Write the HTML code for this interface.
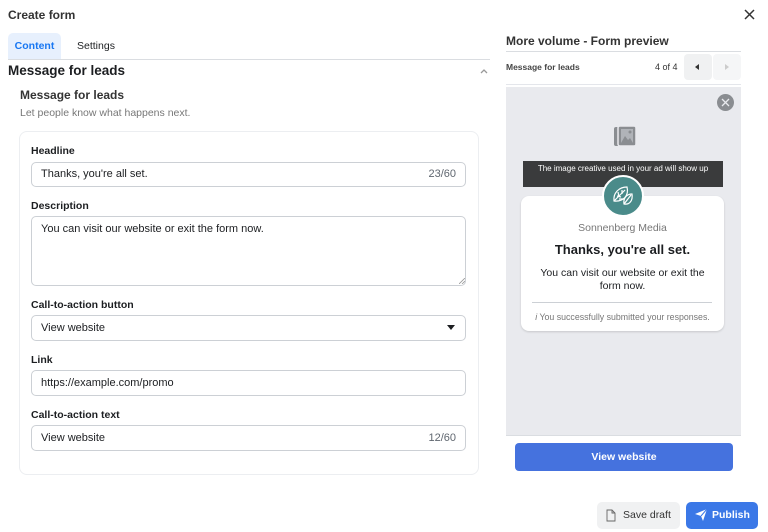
<!DOCTYPE html>
<html><head><meta charset="utf-8"><style>
*{box-sizing:border-box;margin:0;padding:0}
body{width:768px;height:532px;background:#fff;font-family:"Liberation Sans",Arial,sans-serif;position:relative;overflow:hidden;color:#1c1e21}
.a{position:absolute;white-space:nowrap}
.lbl{font-size:10.5px;font-weight:bold;color:#1c1e21}
.inp{position:absolute;left:31px;width:435px;border:1px solid #ccd0d5;border-radius:5px;background:#fff;font-size:11px;color:#1c1e21;padding-left:9px}
.cnt{position:absolute;right:9px;color:#606770;font-size:11px}
</style></head><body>
<div class="a" style="left:8px;top:8px;font-size:12px;font-weight:bold;color:#333">Create form</div>
<svg class="a" style="left:744px;top:9px" width="11" height="11" viewBox="0 0 11 11"><path d="M1 1L10 10M10 1L1 10" stroke="#333" stroke-width="1.5"/></svg>
<div class="a" style="left:8px;top:33px;width:53px;height:26px;background:#e7f0fd;border-radius:5px 5px 0 0;color:#1877f2;font-size:10.5px;font-weight:bold;text-align:center;line-height:26px">Content</div>
<div class="a" style="left:77px;top:33px;line-height:26px;font-size:10.5px;color:#1c1e21">Settings</div>
<div class="a" style="left:8px;top:59px;width:482px;height:1px;background:#dadde1"></div>
<div class="a" style="left:8px;top:63px;font-size:13.5px;font-weight:bold">Message for leads</div>
<svg class="a" style="left:480px;top:68px" width="8" height="6" viewBox="0 0 8 6"><path d="M1 5L4 2L7 5" stroke="#999" stroke-width="1.3" fill="none"/></svg>
<div class="a" style="left:20px;top:88px;font-size:12px;font-weight:bold;color:#333">Message for leads</div>
<div class="a" style="left:20px;top:107px;font-size:10.5px;color:#777">Let people know what happens next.</div>
<div class="a" style="left:19px;top:131px;width:460px;height:344px;border:1px solid #eceef1;border-radius:8px"></div>
<div class="a lbl" style="left:31px;top:145px">Headline</div>
<div class="inp" style="top:162px;height:25px;line-height:23px">Thanks, you're all set.<span class="cnt">23/60</span></div>
<div class="a lbl" style="left:31px;top:200px">Description</div>
<div class="inp" style="top:216px;height:70px;padding-top:6px">You can visit our website or exit the form now.</div>
<svg class="a" style="left:459px;top:278px" width="6" height="6"><path d="M0 6L6 0M3 6L6 3" stroke="#999" stroke-width="0.8"/></svg>
<div class="a lbl" style="left:31px;top:299px">Call-to-action button</div>
<div class="inp" style="top:315px;height:26px;line-height:24px">View website</div>
<svg class="a" style="left:447px;top:325px" width="8" height="5"><path d="M0 0H8L4 5Z" fill="#1c1e21"/></svg>
<div class="a lbl" style="left:31px;top:354px">Link</div>
<div class="inp" style="top:370px;height:26px;line-height:24px">https://example.com/promo</div>
<div class="a lbl" style="left:31px;top:409px">Call-to-action text</div>
<div class="inp" style="top:425px;height:26px;line-height:24px">View website<span class="cnt">12/60</span></div>

<div class="a" style="left:506px;top:34px;font-size:12px;font-weight:bold;color:#333">More volume - Form preview</div>
<div class="a" style="left:506px;top:51px;width:235px;height:1px;background:#dadde1"></div>
<div class="a" style="left:506px;top:62px;font-size:8.5px;font-weight:bold;color:#444">Message for leads</div>
<div class="a" style="left:655px;top:62px;font-size:9px;color:#333">4 of 4</div>
<div class="a" style="left:684px;top:54px;width:28px;height:26px;background:#f0f1f2;border-radius:4px"></div>
<div class="a" style="left:713px;top:54px;width:28px;height:26px;background:#f5f6f7;border-radius:4px"></div>
<svg class="a" style="left:695px;top:64px" width="5" height="6"><path d="M4 0V6L0 3Z" fill="#333"/></svg>
<svg class="a" style="left:725px;top:64px" width="5" height="6"><path d="M0 0V6L4 3Z" fill="#ccc"/></svg>
<div class="a" style="left:506px;top:84px;width:235px;height:1px;background:#e4e6eb"></div>
<div class="a" style="left:506px;top:87px;width:235px;height:348px;background:#e9eaee"></div>
<div class="a" style="left:717px;top:94px;width:17px;height:17px;border-radius:50%;background:#8a8d91"></div>
<svg class="a" style="left:721px;top:98px" width="9" height="9"><path d="M1 1L8 8M8 1L1 8" stroke="#e9eaee" stroke-width="1.3"/></svg>
<svg class="a" style="left:613px;top:125px" width="24" height="23" viewBox="0 0 24 23"><rect x="1" y="2" width="14" height="19" rx="2" fill="#8a8d91"/><rect x="5" y="1" width="18" height="20" rx="2" fill="#8a8d91" stroke="#e9eaee" stroke-width="1.5"/><rect x="8" y="4" width="12" height="14" fill="#b0b3b8"/><path d="M8 18L12 11L15 15L17 13L20 18Z" fill="#8a8d91"/><circle cx="17" cy="7" r="1.5" fill="#8a8d91"/></svg>
<div class="a" style="left:523px;top:161px;width:200px;height:26px;background:#3a3b3c;color:#fff;font-size:8px;text-align:center;line-height:15px">The image creative used in your ad will show up</div>
<div class="a" style="left:521px;top:196px;width:203px;height:135px;background:#fff;border-radius:8px;box-shadow:0 1px 2px rgba(0,0,0,.15)"></div>
<div class="a" style="left:602px;top:175px;width:42px;height:42px;border-radius:50%;background:#4a8b8a;border:2px solid #fff"></div>
<svg class="a" style="left:610px;top:183px" width="26" height="26" viewBox="0 0 26 26" fill="none" stroke="#fff" stroke-width="1.2"><path d="M4 18C3 10 9 4 17 4C19 12 14 19 4 18Z"/><path d="M4 18L15 7"/><path d="M8 9L9 14M12 7L12 11M7 13L11 14M9 16L14 16"/><path d="M14 21C20 22 23 17 22 11C17 11 13 15 14 21Z"/><path d="M14 21L21 12"/></svg>
<div class="a" style="left:521px;width:203px;top:222px;text-align:center;font-size:10.5px;color:#777">Sonnenberg Media</div>
<div class="a" style="left:521px;width:203px;top:242px;text-align:center;font-size:13px;font-weight:bold;color:#1c1e21">Thanks, you're all set.</div>
<div class="a" style="left:521px;width:203px;top:267px;text-align:center;font-size:10.5px;line-height:13px;white-space:normal;padding:0 12px">You can visit our website or exit the form now.</div>
<div class="a" style="left:532px;top:302px;width:180px;height:1px;background:#ccd0d5"></div>
<div class="a" style="left:521px;width:203px;top:312px;text-align:center;font-size:8.8px;color:#777"><i>i</i> You successfully submitted your responses.</div>
<div class="a" style="left:506px;top:435px;width:235px;height:1px;background:#dadde1"></div>
<div class="a" style="left:515px;top:443px;width:218px;height:28px;background:#4572de;border-radius:4px;color:#fff;font-size:10.5px;font-weight:bold;text-align:center;line-height:28px">View website</div>

<div class="a" style="left:597px;top:502px;width:83px;height:27px;background:#f0f1f2;border-radius:5px;font-size:10.5px;color:#333;line-height:27px;padding-left:26px">Save draft</div>
<svg class="a" style="left:606px;top:509px" width="10" height="13"><path d="M1 1H6L9 4V12H1Z M6 1V4H9" fill="none" stroke="#666" stroke-width="0.9"/></svg>
<div class="a" style="left:686px;top:502px;width:72px;height:27px;background:#3b78e7;border-radius:5px;color:#fff;font-size:10.5px;font-weight:bold;line-height:27px;padding-left:26px">Publish</div>
<svg class="a" style="left:694px;top:508px" width="14" height="14" viewBox="0 0 14 14"><path d="M1 6L13 1L9 13L7 8Z" fill="#fff"/><path d="M7 8L13 1" stroke="#3b78e7" stroke-width="1"/></svg>
</body></html>
